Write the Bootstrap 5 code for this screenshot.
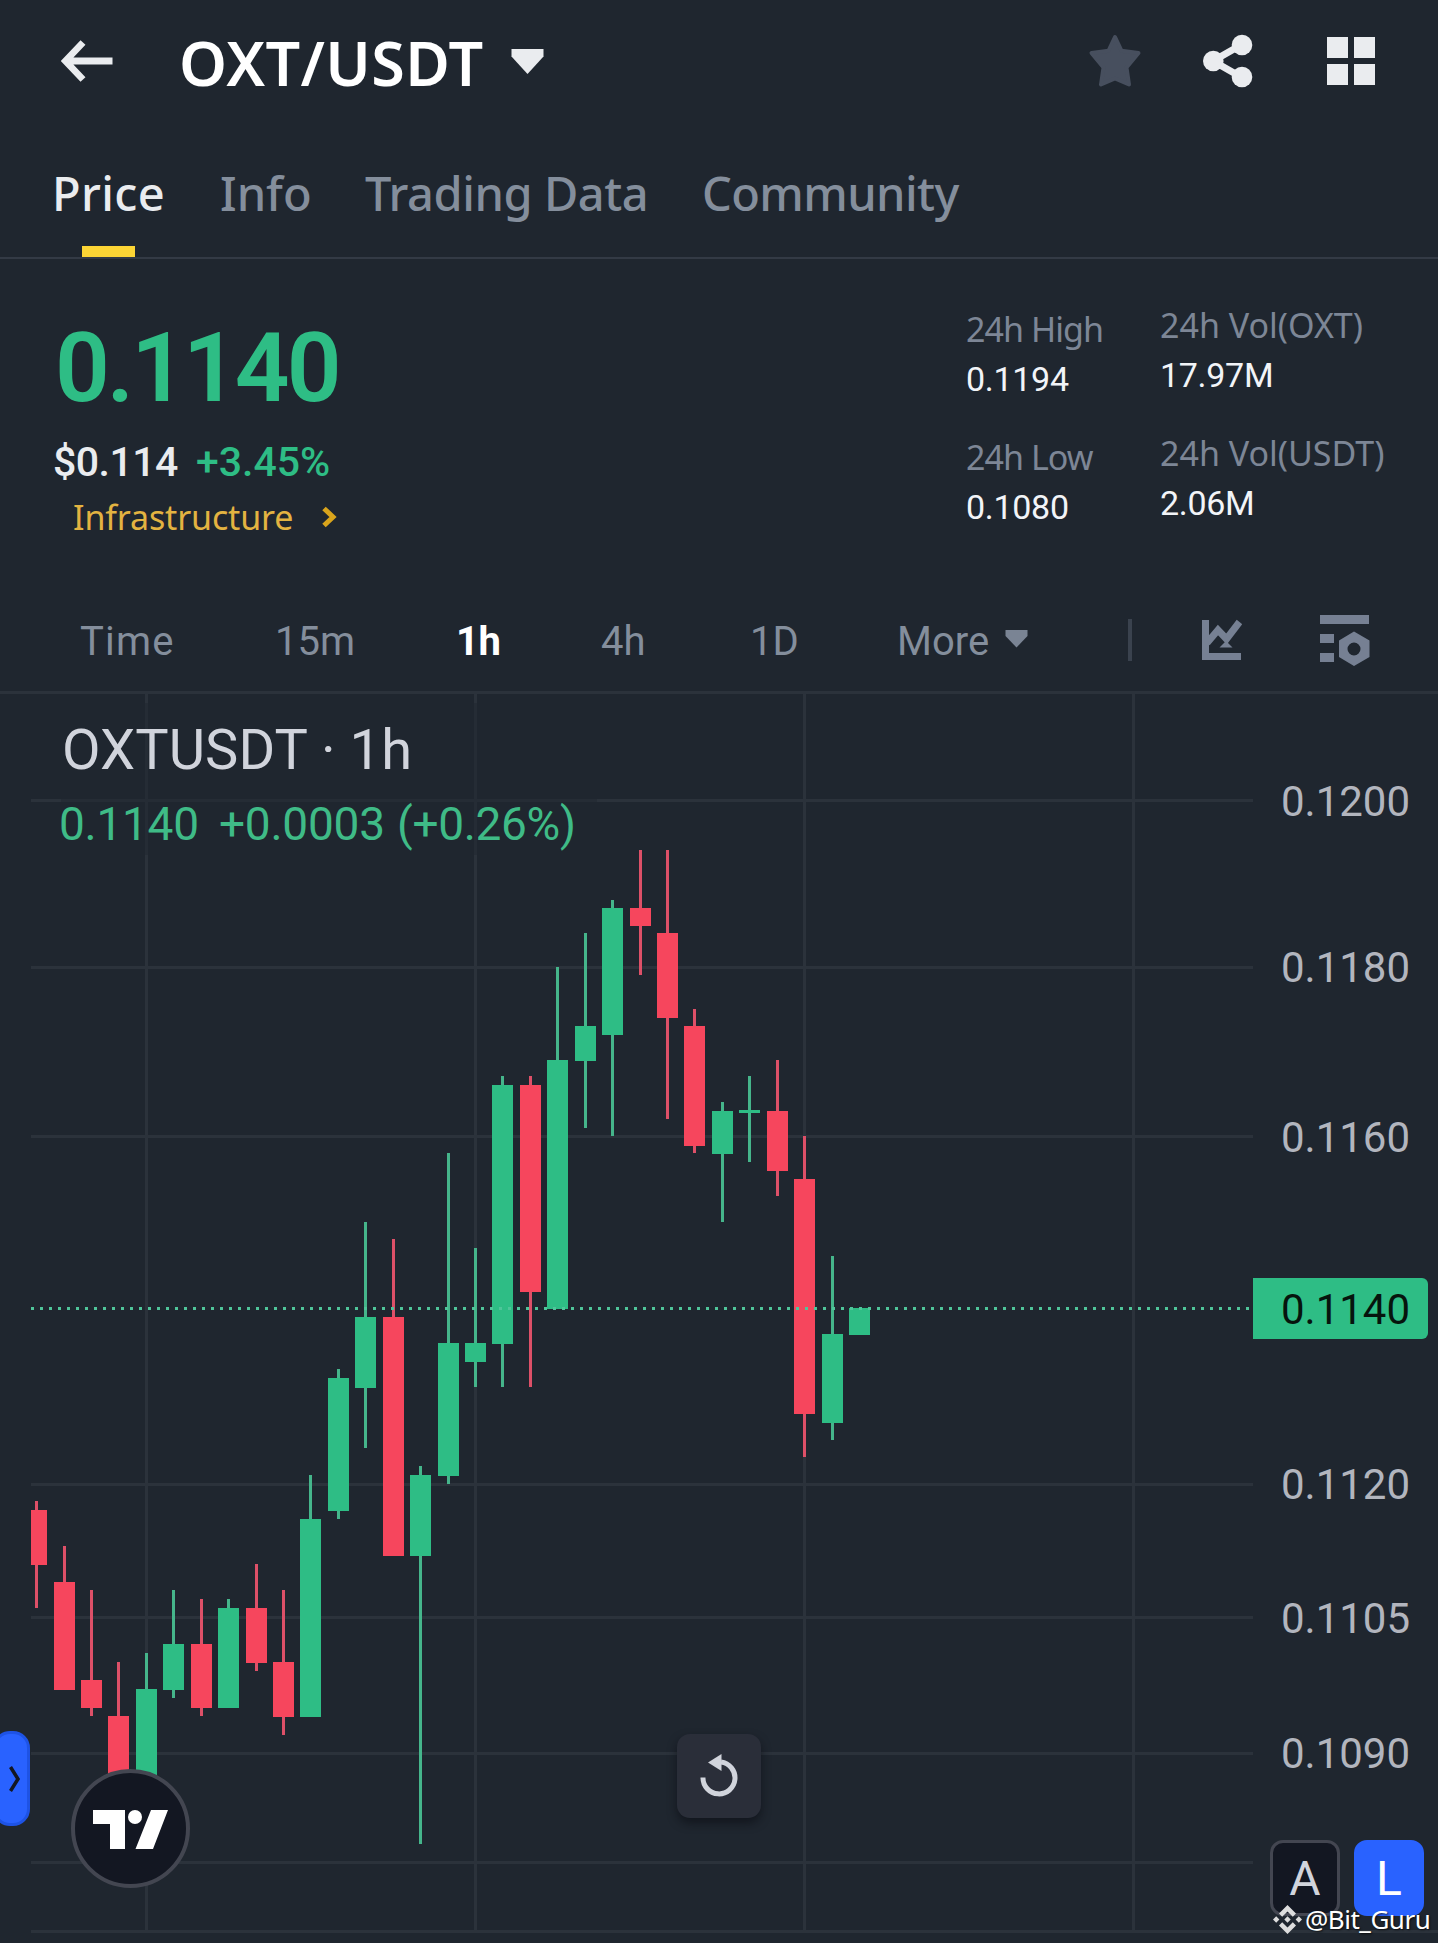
<!DOCTYPE html>
<html lang="en" data-bs-theme="dark">
<head>
<meta charset="utf-8">
<meta name="viewport" content="width=device-width, initial-scale=1">
<title>OXT/USDT</title>
<link href="https://cdn.jsdelivr.net/npm/bootstrap@5.3.0/dist/css/bootstrap.min.css" rel="stylesheet">
<style>
  :root { --ink:#eaecef; --dim:#848e9c; --up:#2ebd85; --down:#f6465d; --bg:#1f262f; }
  body { width:1438px; height:1943px; background:var(--bg); color:var(--ink); font-family:"Noto Sans",sans-serif; overflow:hidden; }
  .din { font-family:Roboto,sans-serif; }
  svg { display:block; flex:none; }

  .top-bar { height:122px; padding-left:61px; padding-right:63px; }
  .pair-name { font-size:61px; font-weight:600; line-height:84px; color:#fff; margin:3px 26px 0 65px; width:306px; white-space:nowrap; letter-spacing:.4px; }

  .page-tabs { height:137px; padding:43px 0 0 53px; border-bottom:2px solid #333a45; display:grid; grid-template-columns:167px 145px 337px 300px; }
  .page-tab { font-size:47px; font-weight:500; line-height:57px; color:var(--dim); white-space:nowrap; }
  .page-tab.active { color:var(--ink); width:111px; letter-spacing:.3px; }
  .tab-trading { letter-spacing:-.45px; }
  .tab-community { letter-spacing:-.6px; }
  .tab-mark { width:53px; height:11px; margin-top:24px; background:#fcd535; }

  .quote { height:333px; padding-left:53px; }
  .last-price { font-size:96px; font-weight:600; line-height:100px; margin:59px 0 0 2px; letter-spacing:-3px; color:var(--up); }
  .sub-price { font-size:41px; font-weight:500; line-height:52px; margin-top:18px; }
  .usd-price { width:143px; letter-spacing:-.5px; }
  .up { color:var(--up); }
  .sector { font-size:34px; line-height:44px; margin-top:7px; padding-left:20px; color:#e3b341; }
  .sector-name { width:248px; letter-spacing:-.15px; }
  .stats { width:472px; }
  .stats-a { width:194px; margin-top:48px; }
  .stats-a .stat-label { letter-spacing:-.95px; }
  .stats-b { margin-top:44px; }
  .stat-label { font-size:34px; line-height:44px; color:#7d8696; white-space:nowrap; }
  .stat-value { font-size:34px; line-height:44px; margin-top:6px; margin-bottom:34px; color:#f2f4f8; letter-spacing:-.3px; }

  .frames { height:99px; padding:1px 0 0 80px; font-size:40px; line-height:48px; color:var(--dim); display:grid; grid-template-columns:195px 181px 145px 149px 147px 231px 74px 118px 60px; }
  .frames .on { color:#fff; font-weight:700; letter-spacing:-.5px; }
  .frame-time { letter-spacing:1.2px; }
  .rule-v { width:4px; height:42px; background:#3a424e; margin-top:-5px; }
  .frames > svg { margin-top:-2px; }

  .chart { height:1252px; }
  .chart text { font-family:Roboto,sans-serif; }
  .tool { position:absolute; }
  .reset-btn { left:677px; top:1043px; width:84px; height:84px; border-radius:13px; background:#2a2e39; box-shadow:0 5px 10px rgba(10,12,18,.6); }
  .drawer-tab { left:-7px; top:1040px; width:37px; height:95px; border-radius:17px; background:#2962ff; border:3px solid #1e53e5; padding-left:13px; }
  .tv-badge { left:71px; top:1078px; width:119px; height:119px; border-radius:50%; background:#131722; border:4px solid #434651; padding-top:1px; }
  .scale-btns { left:1270px; top:1149px; gap:14px; }
  .scale-btn { width:70px; height:76px; border-radius:13px; font:400 48px/72px Roboto,sans-serif; color:#d1d4dc; background:#131722; border:3px solid #434651; text-align:center; }
  .scale-btn.on { background:#2962ff; border-color:#2962ff; color:#fff; }
  .credit { left:1273px; top:1210px; gap:3px; font-size:26px; line-height:36px; letter-spacing:-.5px; color:#fff; text-shadow:1px 1px 2px rgba(0,0,0,.7); white-space:nowrap; }
</style>
</head>
<body class="d-flex flex-column">

<header class="top-bar d-flex align-items-center">
  <svg width="53" height="42" viewBox="0 0 53 42"><path d="M22 2.500 4.500 21 22 39.500M4 21h47.500" fill="none" stroke="#eaecef" stroke-width="6.800"/></svg>
  <h1 class="pair-name">OXT/USDT</h1>
  <svg width="33" height="26" viewBox="0 0 33 26"><path d="M.5 1h32v7.500L16.500 26 .5 8.500z" fill="#eaecef"/></svg>
  <div class="d-flex align-items-center ms-auto">
    <svg width="54" height="54" viewBox="0 0 54 54"><path d="M27 3l6.500 13.800 17 2.200-12 14.500 2.500 17L27 44.500l-14 6 2.500-17L3.500 19l17-2.200z" fill="#474f5e" stroke="#474f5e" stroke-width="4" stroke-linejoin="round"/></svg>
    <svg class="ms-5" width="74" height="54" viewBox="-13 0 74 54"><path d="M38 11 10 27l28 16" fill="none" stroke="#eaecef" stroke-width="7"/><g fill="#eaecef"><circle cx="39" cy="11" r="10.300"/><circle cx="10.300" cy="27" r="10.300"/><circle cx="39" cy="43" r="10.300"/></g></svg>
    <svg style="margin-left:63px" width="48" height="48" viewBox="0 0 48 48"><path d="M0 0h21v21H0zM27 0h21v21H27zM0 27h21v21H0zM27 27h21v21H27z" fill="#eaecef"/></svg>
  </div>
</header>

<nav class="page-tabs">
  <div class="page-tab active d-flex flex-column align-items-center">Price<span class="tab-mark"></span></div>
  <div class="page-tab">Info</div>
  <div class="page-tab tab-trading">Trading Data</div>
  <div class="page-tab tab-community">Community</div>
</nav>

<section class="quote d-flex justify-content-between">
  <div>
    <div class="last-price din">0.1140</div>
    <div class="sub-price din d-flex"><span class="usd-price">$0.114</span><span class="up">+3.45%</span></div>
    <div class="sector d-flex align-items-center"><span class="sector-name">Infrastructure</span>
      <svg width="16" height="22" viewBox="0 0 16 22"><path d="M3 2.500 12 11 3 19.500" fill="none" stroke="#d9a41c" stroke-width="5"/></svg></div>
  </div>
  <div class="stats d-flex">
    <div class="stats-a">
      <div class="stat-label">24h High</div><div class="stat-value din">0.1194</div>
      <div class="stat-label">24h Low</div><div class="stat-value din">0.1080</div>
    </div>
    <div class="stats-b">
      <div class="stat-label">24h Vol(OXT)</div><div class="stat-value din">17.97M</div>
      <div class="stat-label">24h Vol(USDT)</div><div class="stat-value din">2.06M</div>
    </div>
  </div>
</section>

<nav class="frames din align-items-center">
  <span class="frame-time">Time</span><span>15m</span><span class="on">1h</span><span>4h</span><span>1D</span>
  <span class="d-flex align-items-center">More<svg class="ms-3" width="23" height="24" viewBox="0 0 23 24"><path d="M.5 0h22v6L11.500 17.500.5 6z" fill="#7a8494"/></svg></span>
  <span class="rule-v"></span>
  <svg width="40" height="46" viewBox="0 0 40 46"><path d="M3.500 2v36.500H39M5 25l11-13 8.500 9L37.500 4" fill="none" stroke="#768093" stroke-width="7"/><path d="M24 23l6.500 6.500h-13z" fill="#768093"/></svg>
  <svg width="50" height="54" viewBox="0 0 50 54"><path fill="#768093" fill-rule="evenodd" d="M0 1h49v9H0zM0 20h14v9H0zM0 39h14v9H0zM34 17.500l15.500 9V43L34 52 19 43V26.500zM34 28.500a6.500 6.500 0 1 0 0 13 6.500 6.500 0 1 0 0-13z"/></svg>
</nav>

<main class="chart position-relative">
  <svg id="plot" width="1438" height="1252" viewBox="0 691 1438 1252">
    <g id="grid" stroke="#2b323b" stroke-width="3"></g>
    <rect x="61" y="703" width="536" height="152" fill="#1f262f" opacity=".5"/>
    <g id="candles"></g>
    <path d="M31 1308.500H1253" stroke="#4fc59a" stroke-width="3" stroke-dasharray="3 6"/>
    <text x="62" y="769" font-size="56" fill="#d1d4dc" textLength="350">OXTUSDT · 1h</text>
    <g font-size="46" fill="#3fbb87">
      <text x="59" y="840" textLength="140">0.1140</text>
      <text x="219" y="840" textLength="166">+0.0003</text>
      <text x="397" y="840" textLength="179">(+0.26%)</text>
    </g>
    <g id="axis" font-size="42" fill="#b2b5be"></g>
    <path d="M1253 1278h169a6 6 0 0 1 6 6v49a6 6 0 0 1-6 6h-169z" fill="#2ebd85"/>
    <text x="1281" y="1324" font-size="42" fill="#06140d" textLength="129">0.1140</text>
  </svg>

  <div class="tool drawer-tab d-flex align-items-center"><svg width="12" height="28" viewBox="0 0 12 28"><path d="M1.500 2 9 14 1.500 26" fill="none" stroke="#131722" stroke-width="3.500"/></svg></div>
  <div class="tool tv-badge d-flex align-items-center justify-content-center"><svg width="75" height="39" viewBox="94 1811 75 39"><path fill="#fff" d="M94 1811h32v39h-15v-25H94zM152 1811h17l-15 39h-17.500z"/><circle cx="136" cy="1818" r="7" fill="#fff"/></svg></div>
  <div class="tool reset-btn d-flex align-items-center justify-content-center"><svg width="40" height="46" viewBox="0 0 40 46"><path d="M4 24.500a16 16 0 1 0 18-15.500" fill="none" stroke="#d1d4dc" stroke-width="5"/><path d="M22.500 1v17L9 9.500z" fill="#d1d4dc"/></svg></div>
  <div class="tool scale-btns d-flex"><div class="scale-btn">A</div><div class="scale-btn on">L</div></div>
  <div class="tool credit d-flex align-items-center">
    <svg width="29" height="29" viewBox="0 0 29 29" fill="#ddd"><path d="M14.500 0 23 8.500l-3.200 3.200-5.300-5.300-5.300 5.300L6 8.500zM14.500 29 6 20.500l3.200-3.200 5.300 5.300 5.300-5.300 3.200 3.200zM14.500 11.300l3.200 3.200-3.200 3.200-3.200-3.200zM3.200 11.300l3.200 3.200-3.200 3.200L0 14.500zM25.800 11.300l3.200 3.200-3.200 3.200-3.200-3.200z"/></svg>
    <span>@Bit_Guru</span>
  </div>
</main>

<script src="https://cdn.jsdelivr.net/npm/bootstrap@5.3.0/dist/js/bootstrap.bundle.min.js"></script>
<script>
  // Grid lines, axis labels
  const grid = [];
  [800.500,967.500,1136.500,1484.500,1617.500,1753.500,1862.500].forEach(y => grid.push(`<path d="M31 ${y}H1253"/>`));
  [692.500,1931.500].forEach(y => grid.push(`<path d="M${y > 1000 ? 31 : 0} ${y}H1438"/>`));
  [146.500,475.500,804.500,1133.500].forEach(x => grid.push(`<path d="M${x} 691V1932"/>`));
  document.getElementById('grid').innerHTML = grid.join('');
  document.getElementById('axis').innerHTML =
    [['0.1200',816],['0.1180',982],['0.1160',1152],['0.1120',1499],['0.1105',1633],['0.1090',1768]]
      .map(([t, y]) => `<text x="1281" y="${y}" textLength="129">${t}</text>`).join('');

  // Candles: left edge, body top, body bottom, wick top, wick bottom, rising
  const bars = [
    [26,1510,1565,1501,1608,0],[54,1582,1690,1546,1690,0],[81,1680,1708,1590,1716,0],[108,1716,1790,1662,1790,0],
    [136,1689,1790,1653,1790,1],[163,1644,1690,1590,1698,1],[191,1644,1708,1599,1716,0],[218,1608,1708,1599,1708,1],
    [246,1608,1663,1564,1671,0],[273,1662,1717,1590,1735,0],[300,1519,1717,1475,1717,1],[328,1378,1511,1369,1519,1],
    [355,1317,1388,1222,1448,1],[383,1317,1556,1239,1556,0],[410,1475,1556,1466,1844,1],[438,1343,1476,1153,1484,1],
    [465,1343,1362,1248,1387,1],[492,1085,1344,1076,1387,1],[520,1085,1292,1076,1387,0],[547,1060,1309,967,1309,1],
    [575,1026,1061,933,1128,1],[602,908,1035,900,1136,1],[630,908,926,850,975,0],[657,933,1018,850,1119,0],
    [684,1026,1146,1009,1153,0],[712,1111,1154,1102,1222,1],[739,1110,1113,1076,1162,1],[767,1111,1171,1060,1196,0],
    [794,1179,1414,1136,1457,0],[822,1334,1423,1256,1440,1],[849,1308,1335,1308,1335,1]];
  document.getElementById('candles').innerHTML = bars.map(([x, t, b, h, l, up]) => {
    const left = Math.max(x, 31), wick = up ? '#45b58b' : '#dd5068';
    return `<rect x="${x + 9}" y="${h}" width="3" height="${l - h}" fill="${wick}"/>` +
           `<rect x="${left}" y="${t}" width="${x + 21 - left}" height="${b - t}" fill="${up ? '#2ebd85' : '#f6465d'}"/>`;
  }).join('');
</script>
</body>
</html>
